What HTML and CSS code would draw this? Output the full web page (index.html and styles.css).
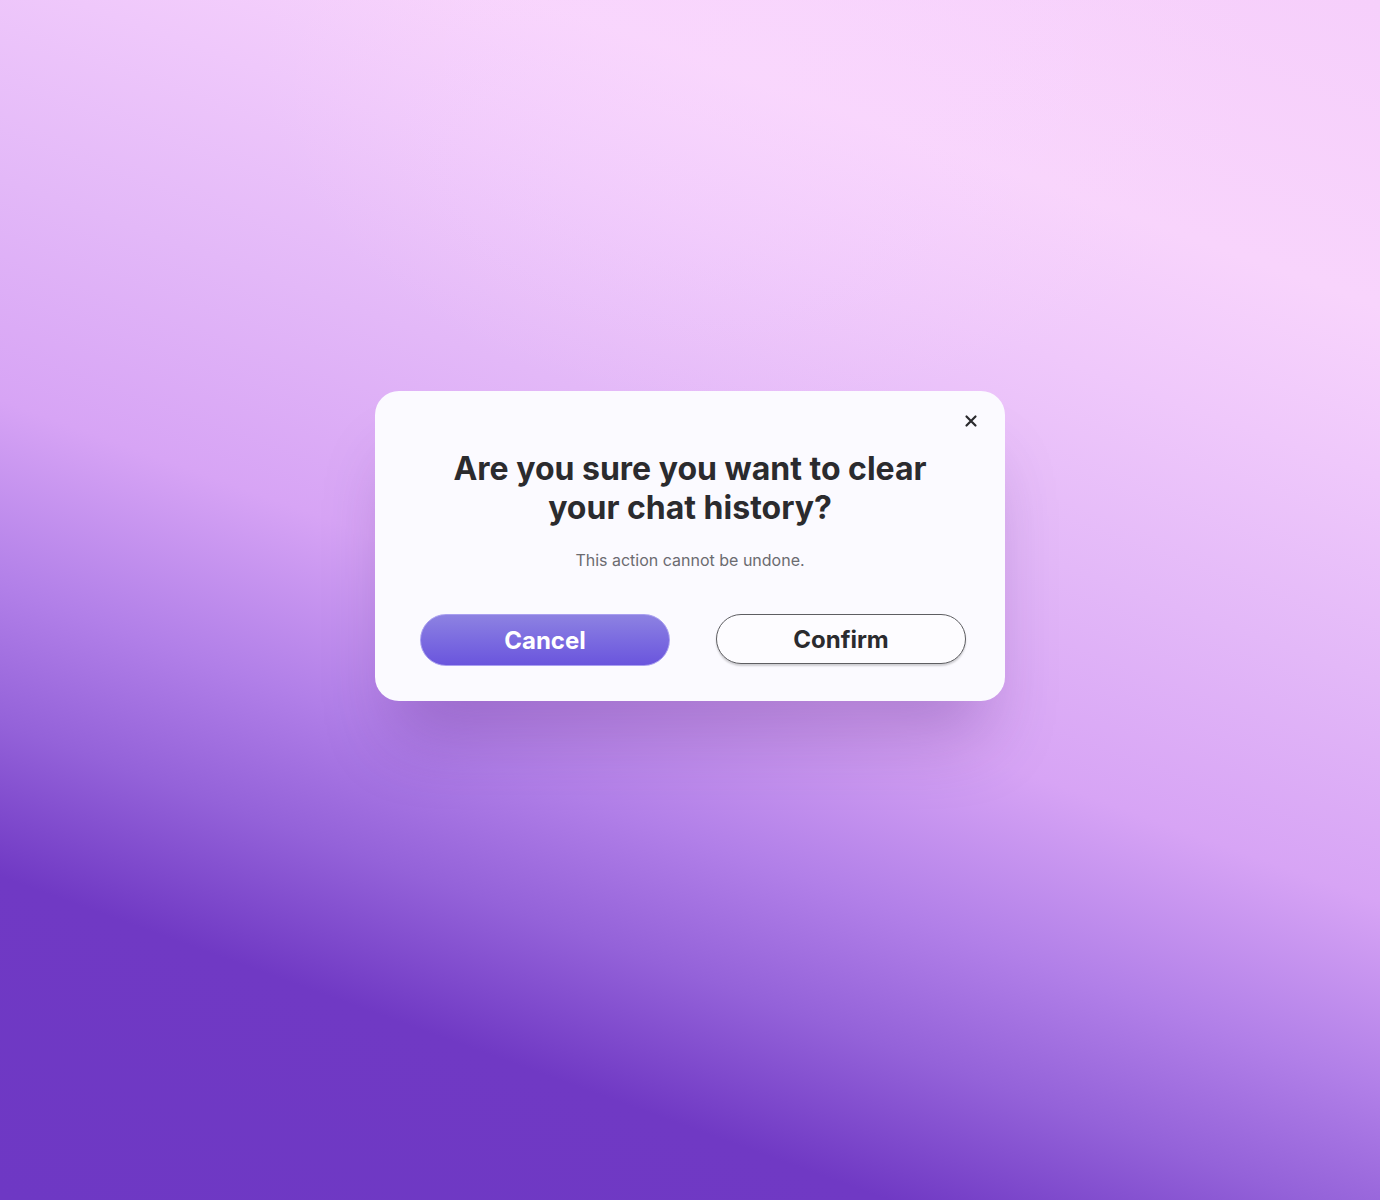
FILE: index.html
```html
<!DOCTYPE html>
<html lang="en">
<head>
<meta charset="utf-8">
<title>Clear chat history</title>
<link rel="stylesheet" href="styles.css">
</head>
<body>
<div class="page">
  <div class="dialog" role="dialog" aria-labelledby="dlg-title">
    <button class="close" aria-label="Close">
      <svg width="14" height="14" viewBox="0 0 14 14" aria-hidden="true"><path d="M2.5 2.5 L11.5 11.5 M11.5 2.5 L2.5 11.5" stroke="#2a2a2d" stroke-width="2.2" stroke-linecap="round"/></svg>
    </button>
    <h1 class="title" id="dlg-title">Are you sure you want to clear<br>your chat history?</h1>
    <p class="subtitle">This action cannot be undone.</p>
    <div class="actions">
      <button class="btn btn-cancel">Cancel</button>
      <button class="btn btn-confirm">Confirm</button>
    </div>
  </div>
</div>
</body>
</html>
```

FILE: styles.css
```css
html, body {
  margin: 0;
  padding: 0;
  height: 100%;
}
body {
  font-family: Inter, "Noto Sans", "Liberation Sans", sans-serif;
  background:
    radial-gradient(ellipse 500px 350px at 55% 5%, rgba(250, 218, 255, 0.45), rgba(250, 218, 255, 0) 100%),
    linear-gradient(200deg,
      #f6cffb 0%,
      #f8d4fc 18%,
      #efc8fb 28%,
      #e3b8f8 40%,
      #d7a4f5 53%,
      #b17fe8 64%,
      #9462d9 72%,
      #7039c4 81%,
      #6e38c4 100%);
  min-height: 1200px;
}
.page {
  display: flex;
  justify-content: center;
  padding-top: 391px;
}
.dialog {
  position: relative;
  width: 630px;
  box-sizing: border-box;
  background: #fbfaff;
  border-radius: 24px;
  padding: 58px 39px 35px 45px;
  box-shadow: 0 55px 70px -20px rgba(70, 25, 120, 0.28);
  text-align: center;
}
.close {
  position: absolute;
  top: 22px;
  right: 26px;
  width: 16px;
  height: 16px;
  padding: 0;
  border: 0;
  background: none;
  display: flex;
  align-items: center;
  justify-content: center;
  cursor: pointer;
}
.title {
  margin: 0 0 0 -6px;
  font-size: 32px;
  line-height: 39px;
  font-weight: 700;
  color: #2b2b2e;
}
.subtitle {
  margin: 21px 0 0 -6px;
  font-size: 16px;
  line-height: 24px;
  color: #6b6b70;
}
.actions {
  margin-top: 42px;
  display: flex;
  gap: 46px;
}
.btn {
  width: 250px;
  height: 52px;
  box-sizing: border-box;
  border-radius: 26px;
  font-family: Inter, "Noto Sans", "Liberation Sans", sans-serif;
  font-size: 24px;
  font-weight: 700;
  padding-bottom: 1px;
  cursor: pointer;
}
.btn-cancel {
  color: #ffffff;
  border: 1px solid #a99ff0;
  background: linear-gradient(180deg, #8d82e2 0%, #7b6be0 50%, #6a55dd 100%);
}
.btn-confirm {
  height: 50px;
  color: #2b2b2e;
  background: #fdfcff;
  border: 1.5px solid #5e5e62;
  box-shadow: 0 2px 2px rgba(0, 0, 0, 0.18);
}
```
